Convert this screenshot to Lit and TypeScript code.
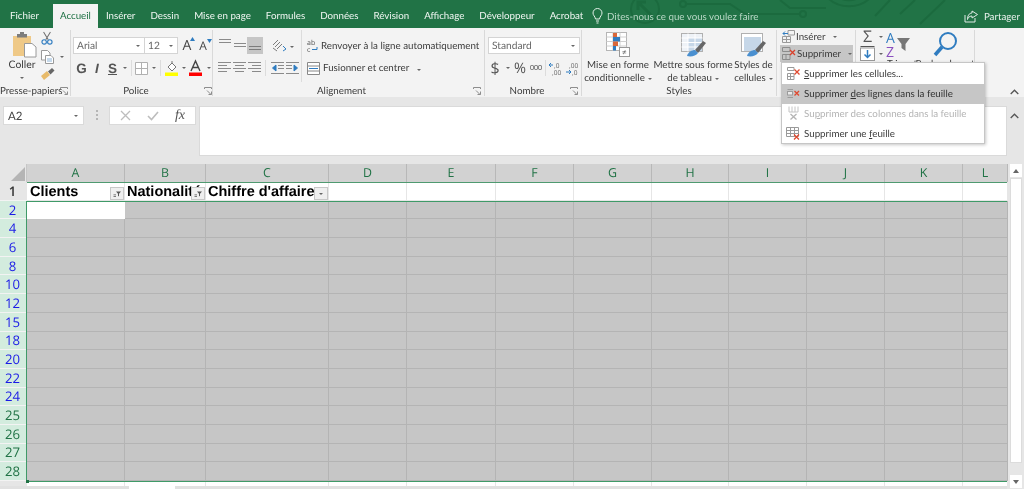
import { LitElement, html, css, svg } from "lit";
import { customElement } from "lit/decorators.js";

const caret = html`<span class="caret"></span>`;
const cbox = (cls: string) => html`<div class="cbox ${cls}">${caret}</div>`;

const lines = (rows: [number, number, number][], w = 16, h = 14, color = "#8a8a8a") => html`<svg width=${w} height=${h} viewBox="0 0 ${w} ${h}">
  ${rows.map(([x1, x2, y]) => svg`<line x1=${x1} x2=${x2} y1=${y + 0.5} y2=${y + 0.5} stroke=${color} stroke-width="1"/>`)}
</svg>`;

const launcher = html`<svg class="launcher" width="8" height="8" viewBox="0 0 8 8"><path d="M.5 .5H7.5V2M.5 .5V2M3 3.5L7 7.5M7.5 4.5V7.5H4.5" fill="none" stroke="#8d8d8d" stroke-width="1"/></svg>`;

const tabs = ["Insérer", "Dessin", "Mise en page", "Formules", "Données", "Révision", "Affichage", "Développeur", "Acrobat"];
const colWidths = [98, 81, 123, 78, 89, 78, 78, 77, 78, 78, 78, 45];
const colNames = "ABCDEFGHIJKL".split("");
const rows = [2, 4, 6, 8, 10, 12, 15, 18, 20, 22, 24, 25, 26, 27, 28];

const funnel = html`<svg width="9" height="8" viewBox="0 0 9 8"><path d="M3 1.5H8L6 3.8V6.5L5 5.8V3.8ZM.5 4.5H3V5.3H.5ZM.5 6H3V6.8H.5Z" fill="#555"/></svg>`;

@customElement("app-root")
export class AppRoot extends LitElement {
  static styles = css`
    :host { display: block; width: 1024px; height: 489px; overflow: hidden; position: relative; background: #e6e6e6; color: #3c3c3c; font-family: Lato, "Open Sans", sans-serif; font-size: 9.75px; text-rendering: geometricPrecision; filter: blur(0.4px); }
    * { box-sizing: border-box; }
    svg { display: block; flex: none; overflow: visible; }
    .caret { display: inline-block; width: 0; height: 0; border: 2.2px solid transparent; border-top: 2.6px solid #666; border-bottom: 0; flex: none; }
    .cbox { display: flex; justify-content: center; flex: none; }
    .w8 { width: 8px; } .w9 { width: 9px; } .w11 { width: 11px; } .w12 { width: 12px; } .w13 { width: 13px; }
    .gap3 { width: 3px; flex: none; } .gap9 { width: 9px; flex: none; }
    .ml3 { margin-left: 3px; } .ml5 { margin-left: 5px; }
    .lt { padding-top: 1px; }

    .tabbar { height: 28px; background: #217346; position: relative; display: flex; align-items: flex-end; color: #fff; overflow: hidden; }
    .circuit { position: absolute; left: 600px; top: 0; }
    .tab-list { display: flex; align-items: flex-end; position: relative; height: 24px; padding-left: 10px; }
    .tab { height: 24px; line-height: 25px; margin-right: 15px; white-space: nowrap; color: #f0f6f2; }
    .tab.file { margin-right: 14px; }
    .tab.active { background: #f3f3f3; color: #217346; padding: 0 7px; margin-right: 8px; }
    .tell { position: absolute; left: 592px; top: 4px; height: 24px; display: flex; align-items: center; gap: 4px; color: #b9d8c6; white-space: nowrap; }
    .share { position: absolute; right: 4px; top: 4px; height: 24px; display: flex; align-items: center; gap: 5px; white-space: nowrap; color: #e8f1ec; }

    .ribbon { height: 69px; background: #f3f3f3; display: flex; padding-top: 2px; position: relative; }
    .group { height: 66px; border-right: 1px solid #d9d9d9; display: grid; grid-template-rows: 55px 11px; flex: none; }
    .glabel { position: relative; text-align: center; line-height: 13px; white-space: nowrap; }
    .launcher { position: absolute; right: 3px; top: 2px; }
    .g-clip { width: 71px; }
    .g-clip .glabel { padding-right: 9px; }
    .g-font { width: 142px; }
    .g-font .glabel { padding-right: 14px; }
    .g-align { width: 272px; }
    .g-align .glabel { padding-right: 14px; }
    .g-num { width: 97px; }
    .g-num .glabel { padding-right: 12px; }
    .g-styles { width: 195px; }
    .g-cells { width: 79px; }
    .g-edit { width: 119px; }

    .clip { display: flex; }
    .paste { width: 44px; display: flex; flex-direction: column; align-items: center; padding-top: 2px; }
    .paste svg { margin-left: 5px; }
    .paste span.t { line-height: 13px; margin-top: 2px; font-size: 10.4px; }
    .paste .caret { margin-top: 5px; }
    .mini { display: flex; flex-direction: column; gap: 4.5px; margin-left: -3px; padding-top: 2px; }
    .copyrow { display: flex; align-items: center; gap: 6px; }

    .tools { display: flex; flex-direction: column; gap: 5px; padding: 6px 0 0 2px; }
    .row { display: flex; align-items: center; height: 18px; }
    .select { height: 17px; background: #fff; border: 1px solid #d4d4d4; display: flex; align-items: center; justify-content: space-between; padding: 1px 4px 0 3px; color: #666; font-size: 10.2px; }
    .s-font { width: 72px; }
    .s-size { width: 34px; margin-left: -1px; }
    .s-num { width: 92px; margin-left: 1px; }
    .grow { font-family: "Open Sans", sans-serif; font-size: 14px; color: #444; position: relative; display: flex; align-items: center; justify-content: center; flex: none; }
    .grow svg { position: absolute; }
    .a-big { width: 18px; }
    .a-big svg { right: 1px; top: 1px; }
    .a-small { width: 14px; font-size: 12px; }
    .a-small svg { right: -2px; top: 2px; }
    .n-dollar { width: 16px; font-size: 16px; color: #555; }
    .n-pct { width: 16px; font-size: 14.5px; color: #555; }
    .n-000 { width: 16px; text-align: center; font-size: 7px; color: #555; flex: none; }
    .fmt { font-family: "Liberation Sans", sans-serif; color: #555; font-size: 13.5px; font-weight: 700; display: flex; align-items: center; justify-content: center; height: 18px; flex: none; }
    .f-g { width: 17px; }
    .f-i { width: 14px; font-style: italic; }
    .f-s { width: 17px; text-decoration: underline; }
    .sep { width: 1px; height: 16px; background: #dcdcdc; flex: none; }
    .sp1 { margin: 0 3px 0 2px; } .sp2 { margin: 0 4px 0 0; } .sp3 { margin: 0 4px 0 3px; } .sp4 { margin: 0 3px 0 1px; }

    .align { display: flex; }
    .a-icons { width: 88px; padding: 6px 0 0 4px; display: flex; flex-direction: column; gap: 5px; }
    .a-row { display: flex; align-items: center; height: 18px; }
    .a-cell { width: 15px; height: 17px; display: flex; align-items: center; justify-content: center; flex: none; }
    .a-cell.on { background: #c6c6c6; width: 16px; }
    .a-wrap { width: 183px; padding: 7px 0 0 5px; border-left: 1px solid #dcdcdc; margin-bottom: 3px; display: flex; flex-direction: column; gap: 4px; }
    .wraprow { display: flex; align-items: center; gap: 3px; height: 18px; white-space: nowrap; }

    .styles { display: flex; }
    .big { display: flex; flex-direction: column; align-items: center; flex: none; padding-top: 2px; }
    .big .ic { height: 27px; display: flex; align-items: flex-start; justify-content: center; }
    .big .tx { text-align: center; line-height: 13px; white-space: nowrap; }
    .big .caret { margin-left: 3px; vertical-align: middle; }
    .b1 { width: 72px; }
    .b2 { width: 78px; }
    .b3 { width: 43px; }

    .cells { display: flex; flex-direction: column; padding: 0 0 0 3px; margin-top: -2px; }
    .cellbtn { height: 17px; width: 73px; display: flex; align-items: center; padding-left: 2px; gap: 1px; white-space: nowrap; }
    .cellbtn.on { background: #c6c6c6; }
    .cellbtn .caret { margin-left: 6px; }

    .edit { display: flex; margin-top: -2px; padding-left: 4px; }
    .e-col { width: 25px; display: flex; flex-direction: column; flex: none; }
    .e-row { height: 17px; display: flex; align-items: center; gap: 4px; }
    .sigma { font-family: "Open Sans", sans-serif; font-size: 16px; color: #555; width: 15px; text-align: center; line-height: 17px; }
    .e-big { display: flex; flex-direction: column; align-items: center; padding-top: 3px; flex: none; }
    .e-big .tx { text-align: center; line-height: 12px; white-space: nowrap; }
    .b-sort { width: 34px; }
    .b-sort svg { align-self: flex-start; margin-left: 1px; }
    .b-find { width: 52px; }
    .collapse { position: absolute; left: 1010px; top: 61px; }

    .menu { position: absolute; left: 781px; top: 62px; width: 204px; height: 82px; background: #fff; border: 1px solid #c6c6c6; box-shadow: 1px 1px 3px rgba(0,0,0,.22); z-index: 5; padding: 1px 0 0; display: flex; flex-direction: column; }
    .mi { height: 20px; display: flex; align-items: center; white-space: nowrap; }
    .mi .mic { width: 22px; display: flex; justify-content: center; flex: none; }
    .mi.on { background: #c6c6c6; color: #333; }
    .mi.off { color: #b4b4b4; }
    .mi u { text-underline-offset: 1px; }

    .fbar { height: 67px; padding: 9px 0 0 3px; display: flex; align-items: flex-start; position: relative; }
    .namebox { width: 81px; height: 19px; background: #fff; border: 1px solid #dadada; display: flex; align-items: center; justify-content: space-between; padding: 1px 5px 0 4px; font-size: 11.5px; color: #444; }
    .dots { width: 25px; display: flex; justify-content: center; padding-top: 4px; }
    .fbtns { width: 87px; height: 19px; background: #fff; border: 1px solid #dadada; display: flex; align-items: center; justify-content: space-around; padding: 0 2px; }
    .fx { font-family: "Liberation Serif", serif; font-style: italic; color: #555; font-size: 14px; }
    .finput { margin-left: 3px; width: 808px; height: 50px; background: #fff; border: 1px solid #dadada; }
    .fchev { margin: 7px 0 0 3px; }

    .sheet { height: 325px; display: flex; position: relative; }
    .gridbox { width: 1007px; height: 325px; display: grid; position: relative; flex: none; }
    .corner { background: #e6e6e6; position: relative; overflow: hidden; border-right: 1px solid #c6c6c6; }
    .corner svg { position: absolute; right: 1px; bottom: 1px; }
    .ch { background: #d2d2d2; color: #217346; text-align: center; line-height: 18px; font-family: "Open Sans", sans-serif; font-size: 12.4px; border-right: 1px solid #b8b8b8; overflow: hidden; }
    .rh { background: #d3ecde; color: #1a1ae6; text-align: center; font-family: "Open Sans", sans-serif; font-size: 13.2px; border-bottom: 1px solid #f3f3f3; display: flex; align-items: center; justify-content: center; padding-right: 2px; }
    .rh.g { color: #217346; }
    .rh.first { background: #e6e6e6; color: #333; font-weight: 600; }
    .c { background: #c6c6c6; border-right: 1px solid #b4b4b4; border-bottom: 1px solid #b4b4b4; min-width: 0; }
    .c.sel { background: #fff; border: 0; }
    .c.head { background: #fff; border-color: #e6e6e6; position: relative; font-family: "Liberation Sans", Arial, sans-serif; font-weight: 700; font-size: 14.5px; color: #000; line-height: 20px; padding-left: 2px; white-space: nowrap; overflow: hidden; }
    .c.head.pad3 { padding-left: 3px; }
    .c.tail { background: #fff; border-bottom: 0; border-color: #e6e6e6; }
    .rh.tail { background: #e6e6e6; border: 0; }
    .fbtn { position: absolute; right: 0; top: 5px; width: 14px; height: 13px; background: #efefef; border: 1px solid #c8c8c8; display: flex; align-items: center; justify-content: center; }
    .selbox { position: absolute; pointer-events: none; background: #3f9a68; }
    .top { left: 27px; top: 18px; width: 980px; height: 1px; background: #4f9a70; }
    .mid { left: 26px; top: 37px; width: 981px; height: 1px; }
    .lft { left: 26px; top: 37px; width: 1px; height: 280px; }
    .bot { left: 26px; top: 317px; width: 981px; height: 1px; }
    .handle { left: 26px; top: 316px; width: 3px; height: 3px; background: #217346; }

    .vscroll { width: 17px; height: 325px; padding: 0 2px 0 3px; display: flex; flex-direction: column; background: #e6e6e6; flex: none; }
    .sb { height: 13px; background: #fff; display: flex; align-items: center; justify-content: center; flex: none; }
    .thumb { height: 285px; margin: 1px 0 12px; background: #fff; border: 1px solid #dcdcdc; flex: none; }
    .upc { width: 0; height: 0; border: 3.5px solid transparent; border-bottom: 4px solid #666; border-top: 0; }
    .dnc { width: 0; height: 0; border: 3.5px solid transparent; border-top: 4px solid #666; border-bottom: 0; }
    .tabs-strip { position: absolute; left: 0; top: 322px; width: 1007px; height: 3px; background: #e1e1e1; display: flex; z-index: 1; }
    .ts-a { width: 129px; }
    .ts-b { width: 46px; background: #fff; }
    .ts-c { flex: 1; }
  `;

  private cellRow(r: number) {
    return colNames.map((_, i) => html`<div class="c ${r === 2 && i === 0 ? "sel" : ""}"></div>`);
  }

  render() {
    return html`
      <div class="tabbar">
        <svg class="circuit" width="424" height="28" viewBox="0 0 424 28" fill="none" stroke="#1b6a3e" stroke-width="2">
          <circle cx="45" cy="9" r="14"/><path d="M52 16L38 2M38 10V2H46" stroke-width="3"/>
          <circle cx="83" cy="4" r="3"/><path d="M86 4H130L145 14H200"/><circle cx="203" cy="14" r="3"/>
          <path d="M180 0L190 8H226M228 -2A26 20 0 0 0 270 -2M240 -2A14 10 0 0 0 258 -2"/>
          <path d="M275 16L290 0M300 14L315 0M320 24L345 0"/>
        </svg>
        <div class="tab-list">
          <span class="tab file">Fichier</span>
          <span class="tab active">Accueil</span>
          ${tabs.map((t) => html`<span class="tab">${t}</span>`)}
        </div>
        <div class="tell">
          <svg width="11" height="16" viewBox="0 0 11 16" fill="none" stroke="#e6f1ea" stroke-width="1"><path d="M3.5 11C3 8 1 7.5 1 5A4.5 4.5 0 0 1 10 5C10 7.5 8 8 7.5 11ZM4 13H7M4.5 15H6.5"/></svg>
          <span class="lt">Dites-nous ce que vous voulez faire</span>
        </div>
        <div class="share">
          <svg width="15" height="13" viewBox="0 0 15 13" fill="none" stroke="#dfeae4"><path d="M1 5V12H11V8M8 1L13.5 4.5L8 8V6C5 6 4 8 3.5 9.5C3.5 6 5 3 8 3Z"/></svg>
          <span class="lt">Partager</span>
        </div>
      </div>

      <div class="ribbon">
        <div class="group g-clip">
          <div class="clip">
            <div class="paste">
              <svg width="25" height="25" viewBox="0 0 25 25"><rect x="1" y="4" width="18" height="20" fill="#efc987"/><rect x="5" y="2" width="10" height="3.5" fill="#7d7d7d"/><rect x="8" y="0" width="4" height="3" fill="#7d7d7d"/><path d="M12.5 11.5H20L24 15V25H12.5Z" fill="#fff" stroke="#9a9a9a"/></svg>
              <span class="t">Coller</span>
              ${caret}
            </div>
            <div class="mini">
              <svg width="12" height="13" viewBox="0 0 14 15" fill="none"><path d="M3 0L8.5 9M11 0L5.5 9" stroke="#6f6f6f" stroke-width="1.2"/><circle cx="3.7" cy="11.5" r="2.6" stroke="#2f7cc0" stroke-width="1.3"/><circle cx="10.3" cy="11.5" r="2.6" stroke="#2f7cc0" stroke-width="1.3"/></svg>
              <div class="copyrow">
                <svg width="13" height="14" viewBox="0 0 13 14" fill="#fff" stroke="#9a9a9a"><path d="M.5 .5H6.5L9 3V10H.5Z"/><path d="M4.5 5.5H10L12.5 8V13.5H4.5Z"/><path d="M6 9H11M6 11H11" stroke="#8db4d8"/></svg>
                ${caret}
              </div>
              <svg width="14" height="13" viewBox="0 0 14 13"><path d="M0 8L6 3L9 7L3 12Z" fill="#e8bb6b"/><path d="M7 3.5L11 0L13.5 2.5L9.5 6.5Z" fill="#666"/></svg>
            </div>
          </div>
          <div class="glabel">Presse-papiers${launcher}</div>
        </div>

        <div class="group g-font">
          <div class="tools">
            <div class="row">
              <div class="select s-font"><span>Arial</span>${caret}</div>
              <div class="select s-size"><span>12</span>${caret}</div>
              <div class="grow a-big">A<svg width="5" height="4" viewBox="0 0 5 4"><path d="M0 4L2.5 0L5 4Z" fill="#2f7cc0"/></svg></div>
              <div class="grow a-small">A<svg width="5" height="4" viewBox="0 0 5 4"><path d="M0 0H5L2.500 4Z" fill="#2f7cc0"/></svg></div>
            </div>
            <div class="row">
              <div class="fmt f-g">G</div>
              <div class="fmt f-i">I</div>
              <div class="fmt f-s">S</div>
              ${cbox("w8")}
              <div class="sep sp1"></div>
              <svg width="13" height="13" viewBox="0 0 13 13" fill="#fff" stroke="#b0b0b0"><path d="M.5 .5H12.500V12.500H.5ZM6.500 .5V12.500M.5 6.500H12.500"/></svg>
              ${cbox("w12")}
              <div class="sep sp2"></div>
              <svg width="13" height="16" viewBox="0 0 13 16"><path d="M3 7L7 3L11 7L7 11Z" fill="#fff" stroke="#777"/><path d="M7 1V4" stroke="#777"/><rect y="12.500" width="13" height="3.500" fill="#ffff00"/></svg>
              ${cbox("w11")}
              <svg width="13" height="16" viewBox="0 0 13 16"><path d="M2 11L6.500 1L11 11M4 7.500H9" fill="none" stroke="#444" stroke-width="1.400"/><rect y="12.500" width="13" height="3.500" fill="#ff0000"/></svg>
              ${cbox("w13")}
            </div>
          </div>
          <div class="glabel">Police${launcher}</div>
        </div>

        <div class="group g-align">
          <div class="align">
            <div class="a-icons">
              <div class="a-row">
                <div class="a-cell">${lines([[1, 13, 1], [1, 13, 4]], 14, 14)}</div>
                <div class="a-cell">${lines([[1, 13, 5], [1, 13, 8]], 14, 14)}</div>
                <div class="a-cell on">${lines([[2, 14, 8], [2, 14, 11]], 16, 14, "#7c7c7c")}</div>
                <div class="gap9"></div>
                <svg width="15" height="13" viewBox="0 0 15 13" fill="none" stroke="#7c7c7c"><path d="M1 6L6 1M3 8L8 3M5 10L10 5M1 9L5 12"/><path d="M11 7L14 10L11 12" stroke="#2f7cc0"/></svg>
                <span class="ml3">${caret}</span>
              </div>
              <div class="a-row">
                <div class="a-cell">${lines([[1, 14, 1], [1, 10, 4], [1, 14, 7], [1, 10, 10]], 15)}</div>
                <div class="a-cell">${lines([[1, 14, 1], [3, 12, 4], [1, 14, 7], [3, 12, 10]], 15)}</div>
                <div class="a-cell">${lines([[1, 14, 1], [5, 14, 4], [1, 14, 7], [5, 14, 10]], 15)}</div>
                <div class="sep sp3"></div>
                <div class="a-cell"><svg width="13" height="12" viewBox="0 0 13 12" fill="none" stroke="#8a8a8a"><path d="M0 .5H13M7 3.500H13M7 6.500H13M0 11.500H13"/><path d="M5 3L1.500 6L5 9Z" fill="#2f7cc0" stroke="#2f7cc0"/></svg></div>
                <div class="a-cell"><svg width="13" height="12" viewBox="0 0 13 12" fill="none" stroke="#8a8a8a"><path d="M0 .5H13M0 3.500H6M0 6.500H6M0 11.500H13"/><path d="M8 3L11.500 6L8 9Z" fill="#2f7cc0" stroke="#2f7cc0"/></svg></div>
              </div>
            </div>
            <div class="a-wrap">
              <div class="wraprow">
                <svg width="11" height="14" viewBox="0 0 11 14"><text x="0" y="6" font-size="7" fill="#555" font-family="Open Sans">ab</text><text x="0" y="13" font-size="7" fill="#555" font-family="Open Sans">c</text><path d="M5 10.500H10V8" stroke="#2f7cc0" fill="none"/></svg>
                <span>Renvoyer à la ligne automatiquement</span>
              </div>
              <div class="wraprow">
                <svg width="13" height="13" viewBox="0 0 13 13" fill="#fff" stroke="#888"><path d="M.5 .5H12.500V12.500H.5ZM.5 4H12.500M.5 9H12.500"/><path d="M2 6.500H11" stroke="#2f7cc0"/></svg>
                <span>Fusionner et centrer</span>
                <span class="ml5">${caret}</span>
              </div>
            </div>
          </div>
          <div class="glabel">Alignement${launcher}</div>
        </div>

        <div class="group g-num">
          <div class="tools">
            <div class="row"><div class="select s-num"><span>Standard</span>${caret}</div></div>
            <div class="row">
              <div class="grow n-dollar">$</div>
              ${cbox("w9")}
              <div class="grow n-pct">%</div>
              <div class="n-000">000</div>
              <div class="sep sp4"></div>
              <svg width="14" height="13" viewBox="0 0 14 13"><text x="5" y="6" font-size="6.500" fill="#666" font-family="Open Sans">,0</text><text x="3" y="12.500" font-size="6.500" fill="#666" font-family="Open Sans">,00</text><path d="M0 3H4M2 1L0 3L2 5" stroke="#2f7cc0" fill="none"/></svg>
              <div class="gap3"></div>
              <svg width="14" height="13" viewBox="0 0 14 13"><text x="3" y="6" font-size="6.500" fill="#666" font-family="Open Sans">,00</text><text x="6" y="12.500" font-size="6.500" fill="#666" font-family="Open Sans">,0</text><path d="M0 10H5M3 8L5 10L3 12" stroke="#2f7cc0" fill="none"/></svg>
            </div>
          </div>
          <div class="glabel">Nombre${launcher}</div>
        </div>

        <div class="group g-styles">
          <div class="styles">
            <div class="big b1">
              <div class="ic"><svg width="24" height="25" viewBox="0 0 24 25"><rect x=".5" y=".5" width="20" height="18" fill="#fff" stroke="#b5b5b5"/><path d="M.5 5H20.500M.5 9.500H20.500M.5 14H20.500M7 .5V18.500M14 .5V18.500" stroke="#d0d0d0"/><rect x="7" y="1" width="4" height="4" fill="#d9673a"/><rect x="7" y="5" width="7" height="4.500" fill="#2f7cc0"/><rect x="7" y="9.500" width="5" height="4.500" fill="#d9673a"/><rect x="7" y="14" width="3" height="4.500" fill="#2f7cc0"/><rect x="13.500" y="15.500" width="10" height="9" fill="#fff" stroke="#999"/><text x="16" y="23" font-size="8" fill="#555" font-family="Open Sans">≠</text></svg></div>
              <div class="tx">Mise en forme<br />conditionnelle<span class="caret"></span></div>
            </div>
            <div class="big b2">
              <div class="ic"><svg width="25" height="25" viewBox="0 0 25 25"><rect x=".5" y="1.500" width="21" height="18" fill="#eef2f7" stroke="#b0b0b0"/><rect x="7" y="6" width="14" height="13" fill="#c6d7e8"/><path d="M.5 6H21.500M.5 10.500H21.500M.5 15H21.500M7 1.500V19.500M14 1.500V19.500" stroke="#fff"/><path d="M14 18L22 9L25 11L17 21Z" fill="#666"/><path d="M6 24C7 20 11 18 14 18L17 21C15 24 10 25 6 24Z" fill="#4a90d0"/></svg></div>
              <div class="tx">Mettre sous forme<br />de tableau<span class="caret"></span></div>
            </div>
            <div class="big b3">
              <div class="ic"><svg width="25" height="25" viewBox="0 0 25 25"><rect x=".5" y="1.500" width="21" height="18" fill="#fff" stroke="#b0b0b0"/><rect x="3" y="5" width="17" height="14" fill="#c6d7e8"/><path d="M14 18L22 9L25 11L17 21Z" fill="#666"/><path d="M6 24C7 20 11 18 14 18L17 21C15 24 10 25 6 24Z" fill="#4a90d0"/></svg></div>
              <div class="tx">Styles de<br />cellules<span class="caret"></span></div>
            </div>
          </div>
          <div class="glabel">Styles</div>
        </div>

        <div class="group g-cells">
          <div class="cells">
            <div class="cellbtn">
              <svg width="13" height="13" viewBox="0 0 13 13" fill="none" stroke="#9a9a9a"><path d="M.5 6.500H8.500V12.500H.5ZM4.500 6.500V12.500M.5 9.500H8.500M6 .5H12.500V5H6Z"/><path d="M1 3.500H6M1 3.500L3 1.500M1 3.500L3 5.500" stroke="#2f7cc0"/></svg>
              <span class="lt">Insérer</span>${caret}
            </div>
            <div class="cellbtn on">
              <svg width="14" height="13" viewBox="0 0 14 13" fill="none" stroke="#8c8c8c"><path d="M.5 .5H8V4.500H.5ZM.5 7.500H8V12.500H.5ZM4 7.500V12.500"/><path d="M8 3L13 8M13 3L8 8" stroke="#d9402b" stroke-width="1.300"/></svg>
              <span class="lt">Supprimer</span>${caret}
            </div>
          </div>
          <div class="glabel"></div>
        </div>

        <div class="group g-edit">
          <div class="edit">
            <div class="e-col">
              <div class="e-row"><span class="sigma">Σ</span>${caret}</div>
              <div class="e-row"><svg width="15" height="15" viewBox="0 0 15 15"><rect x=".5" y="2" width="14" height="12.500" fill="#fff" stroke="#999"/><path d="M.5 .5H14.500" stroke="#555"/><path d="M7.500 4V11M4.500 8.500L7.500 11.500L10.500 8.500" fill="none" stroke="#2f7cc0" stroke-width="1.500"/></svg>${caret}</div>
            </div>
            <div class="e-big b-sort">
              <svg width="25" height="27" viewBox="0 0 25 27"><text x="0" y="12" font-size="14" fill="#2f7cc0" font-family="Open Sans">A</text><text x="0" y="26" font-size="14" fill="#8a4fbf" font-family="Open Sans">Z</text><path d="M11 7H24L19.500 13V20L15.500 17V13Z" fill="#777"/></svg>
              <div class="tx">Trier et<br />filtrer</div>
            </div>
            <div class="e-big b-find">
              <svg width="25" height="27" viewBox="0 0 25 27" fill="none"><circle cx="15" cy="10" r="8" stroke="#2f7cc0" stroke-width="2"/><path d="M9 16L2 24" stroke="#2f7cc0" stroke-width="3.500"/></svg>
              <div class="tx">Rechercher et<br />sélectionner</div>
            </div>
          </div>
          <div class="glabel"></div>
        </div>
        <svg class="collapse" width="9" height="6" viewBox="0 0 9 6" fill="none" stroke="#555" stroke-width="1.300"><path d="M.7 5L4.500 1.200L8.300 5"/></svg>
      </div>

      <div class="menu">
        <div class="mi"><span class="mic"><svg width="13" height="13" viewBox="0 0 13 13" fill="none" stroke="#9a9a9a"><path d="M.5 .5H7V3.500H.5ZM.5 6.500H7V12.500H.5ZM3.500 6.500V12.500M.5 9.500H7"/><path d="M7.500 2.500L12.500 7.500M12.500 2.500L7.500 7.500" stroke="#e0492f" stroke-width="1.300"/></svg></span><span class="lt"><u>S</u>upprimer les cellules...</span></div>
        <div class="mi on"><span class="mic"><svg width="13" height="11" viewBox="0 0 13 11" fill="none"><path d="M.5 1.500H6M.5 9.500H6" stroke="#9c9c9c"/><rect x=".5" y="3.500" width="5" height="3.500" fill="#eaeaea" stroke="#9c9c9c"/><path d="M7.500 3L12 7.500M12 3L7.500 7.500" stroke="#e0492f" stroke-width="1.300"/></svg></span><span class="lt">Supprimer <u>d</u>es lignes dans la feuille</span></div>
        <div class="mi off"><span class="mic"><svg width="11" height="14" viewBox="0 0 11 14" fill="none" stroke="#c4c4c4"><path d="M1 .5V6M4 .5V6M7 .5V6M10 .5V6M1 6H10"/><path d="M2.500 8L8.500 13.500M8.500 8L2.500 13.500" stroke="#b4b4b4" stroke-width="1.300"/></svg></span><span class="lt">Su<u>p</u>primer des colonnes dans la feuille</span></div>
        <div class="mi"><span class="mic"><svg width="14" height="13" viewBox="0 0 14 13" fill="#fff" stroke="#9a9a9a"><path d="M.5 .5H12.500V9.500H.5ZM.5 3.500H12.500M.5 6.500H12.500M4.500 .5V9.500M8.500 .5V9.500"/><path d="M8 7.500L13 12.500M13 7.500L8 12.500" fill="none" stroke="#e0492f" stroke-width="1.300"/></svg></span><span class="lt">Supprimer une <u>f</u>euille</span></div>
      </div>

      <div class="fbar">
        <div class="namebox"><span>A2</span>${caret}</div>
        <div class="dots"><svg width="2" height="10" viewBox="0 0 2 10" fill="#b5b5b5"><rect y="0" width="2" height="2"/><rect y="4" width="2" height="2"/><rect y="8" width="2" height="2"/></svg></div>
        <div class="fbtns">
          <svg width="11" height="11" viewBox="0 0 11 11" stroke="#bdbdbd" stroke-width="1.300"><path d="M1 1L10 10M10 1L1 10"/></svg>
          <svg width="12" height="10" viewBox="0 0 12 10" fill="none" stroke="#bdbdbd" stroke-width="1.600"><path d="M1 5L4.500 8.500L11 1"/></svg>
          <span class="fx">fx</span>
        </div>
        <div class="finput"></div>
        <svg class="fchev" width="9" height="6" viewBox="0 0 9 6" fill="none" stroke="#555" stroke-width="1.300"><path d="M.7 5L4.500 1.200L8.300 5"/></svg>
      </div>

      <div class="sheet">
        <div class="gridbox" style="grid-template-columns:27px ${colWidths.map((w) => w + "px").join(" ")};grid-template-rows:18px repeat(16, 18.7px) 1fr">
          <div class="corner"><svg width="14" height="14" viewBox="0 0 14 14"><path d="M14 0V14H0Z" fill="#b5b5b5"/></svg></div>
          ${colNames.map((n) => html`<div class="ch">${n}</div>`)}
          <div class="rh first">1</div>
          <div class="c head pad3">Clients<span class="fbtn">${funnel}</span></div>
          <div class="c head">Nationalité<span class="fbtn">${funnel}</span></div>
          <div class="c head">Chiffre d'affaires<span class="fbtn">${caret}</span></div>
          ${colNames.slice(3).map(() => html`<div class="c head"></div>`)}
          ${rows.map((r) => html`<div class="rh ${r >= 25 ? "g" : ""}">${r}</div>${this.cellRow(r)}`)}
          <div class="rh tail"></div>
          ${colNames.map(() => html`<div class="c tail"></div>`)}
          <div class="selbox top"></div>
          <div class="selbox mid"></div>
          <div class="selbox lft"></div>
          <div class="selbox bot"></div>
          <div class="selbox handle"></div>
          <div class="tabs-strip"><div class="ts-a"></div><div class="ts-b"></div><div class="ts-c"></div></div>
        </div>
        <div class="vscroll">
          <div class="sb"><span class="upc"></span></div>
          <div class="thumb"></div>
          <div class="sb"><span class="dnc"></span></div>
        </div>
      </div>
    `;
  }
}
